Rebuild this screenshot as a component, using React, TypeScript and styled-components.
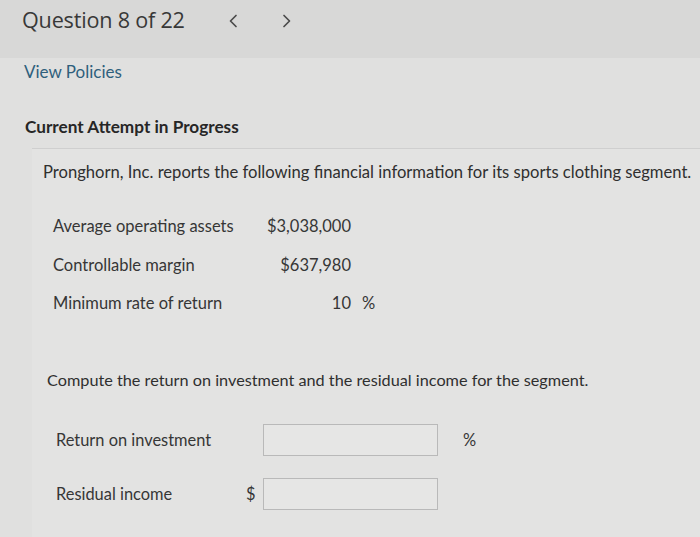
import React from "react";
import styled, { createGlobalStyle } from "styled-components";

const Global = createGlobalStyle`
  html, body { margin: 0; padding: 0; }
  body {
    width: 700px;
    height: 537px;
    overflow: hidden;
    background: #e0e0df;
    font-family: Lato, "Open Sans", sans-serif;
    color: #2f2f2f;
  }
`;

const Page = styled.div`
  display: flex;
  flex-direction: column;
  height: 537px;
`;

const Header = styled.header`
  height: 58px;
  background: #d8d8d7;
  display: flex;
  align-items: flex-start;
  padding: 5px 0 0 22px;
  box-sizing: border-box;
`;

const Title = styled.h1`
  margin: 0;
  font-family: "Open Sans", sans-serif;
  font-weight: 400;
  font-size: 21.6px;
  color: #383838;
  letter-spacing: -0.2px;
`;

const Nav = styled.button<{ $ml: number }>`
  background: none;
  border: 0;
  padding: 0;
  margin-left: ${(p) => p.$ml}px;
  margin-top: 8px;
  display: flex;
`;

const Body = styled.div`
  flex: 1;
  display: flex;
  flex-direction: column;
  padding-top: 3px;
`;

const PolicyLink = styled.a`
  margin-left: 24px;
  font-size: 17px;
  color: #2f5f7c;
  text-decoration: none;
`;

const Attempt = styled.h2`
  margin: 34px 0 0 25px;
  font-size: 17.2px;
  font-weight: 700;
  color: #262626;
`;

const Panel = styled.section`
  margin: 11px 0 0 32px;
  flex: 1;
  border-top: 1px solid #cfcfcf;
  background: #e3e3e2;
  padding: 13px 0 0 11px;
`;

const Intro = styled.p`
  margin: 0;
  font-size: 16.6px;
`;

const DataGrid = styled.div`
  display: grid;
  grid-template-columns: 210px 88px 40px;
  margin: 25px 0 0 10px;
  font-size: 16.5px;
  color: #363636;
`;

const Cell = styled.div<{ $right?: boolean }>`
  height: 38.5px;
  display: flex;
  align-items: center;
  justify-content: ${(p) => (p.$right ? "flex-end" : "flex-start")};
`;

const Unit = styled.div`
  height: 38.5px;
  display: flex;
  align-items: center;
  padding-left: 11px;
`;

const Prompt = styled.p`
  margin: 47px 0 0 4px;
  font-size: 16.25px;
`;

const AnswerGrid = styled.div`
  display: grid;
  grid-template-columns: 190px 17px 175px 38px;
  grid-auto-rows: 32px;
  row-gap: 22px;
  margin: 35px 0 0 13px;
  font-size: 16.4px;
  color: #363636;
  align-items: center;
`;

const Field = styled.input`
  width: 175px;
  height: 32px;
  box-sizing: border-box;
  border: 1px solid #b9b9b9;
  background: #e6e6e5;
  outline: none;
`;

const Sym = styled.span<{ $pad?: number }>`
  display: flex;
  align-items: center;
  padding-left: ${(p) => p.$pad ?? 0}px;
`;

const Chevron = ({ dir }: { dir: "l" | "r" }) => (
  <svg width="12" height="16" viewBox="0 0 12 16" fill="none">
    <path
      d={dir === "l" ? "M9 2.5 L3.5 8 L9 13.5" : "M3 2.5 L8.5 8 L3 13.5"}
      stroke="#4a4a4a"
      strokeWidth="1.7"
      strokeLinecap="round"
      strokeLinejoin="round"
    />
  </svg>
);

const rows = [
  ["Average operating assets", "$3,038,000", ""],
  ["Controllable margin", "$637,980", ""],
  ["Minimum rate of return", "10", "%"],
];

export default function App() {
  return (
    <>
      <Global />
      <Page>
        <Header>
          <Title>Question 8 of 22</Title>
          <Nav $ml={42}>
            <Chevron dir="l" />
          </Nav>
          <Nav $ml={42}>
            <Chevron dir="r" />
          </Nav>
        </Header>
        <Body>
          <PolicyLink href="#">View Policies</PolicyLink>
          <Attempt>Current Attempt in Progress</Attempt>
          <Panel>
            <Intro>
              Pronghorn, Inc. reports the following financial information for its sports clothing segment.
            </Intro>
            <DataGrid>
              {rows.map(([label, value, unit]) => (
                <React.Fragment key={label}>
                  <Cell>{label}</Cell>
                  <Cell $right>{value}</Cell>
                  <Unit>{unit}</Unit>
                </React.Fragment>
              ))}
            </DataGrid>
            <Prompt>Compute the return on investment and the residual income for the segment.</Prompt>
            <AnswerGrid>
              <span>Return on investment</span>
              <span />
              <Field />
              <Sym $pad={25}>%</Sym>
              <span>Residual income</span>
              <Sym>$</Sym>
              <Field />
              <span />
            </AnswerGrid>
          </Panel>
        </Body>
      </Page>
    </>
  );
}
